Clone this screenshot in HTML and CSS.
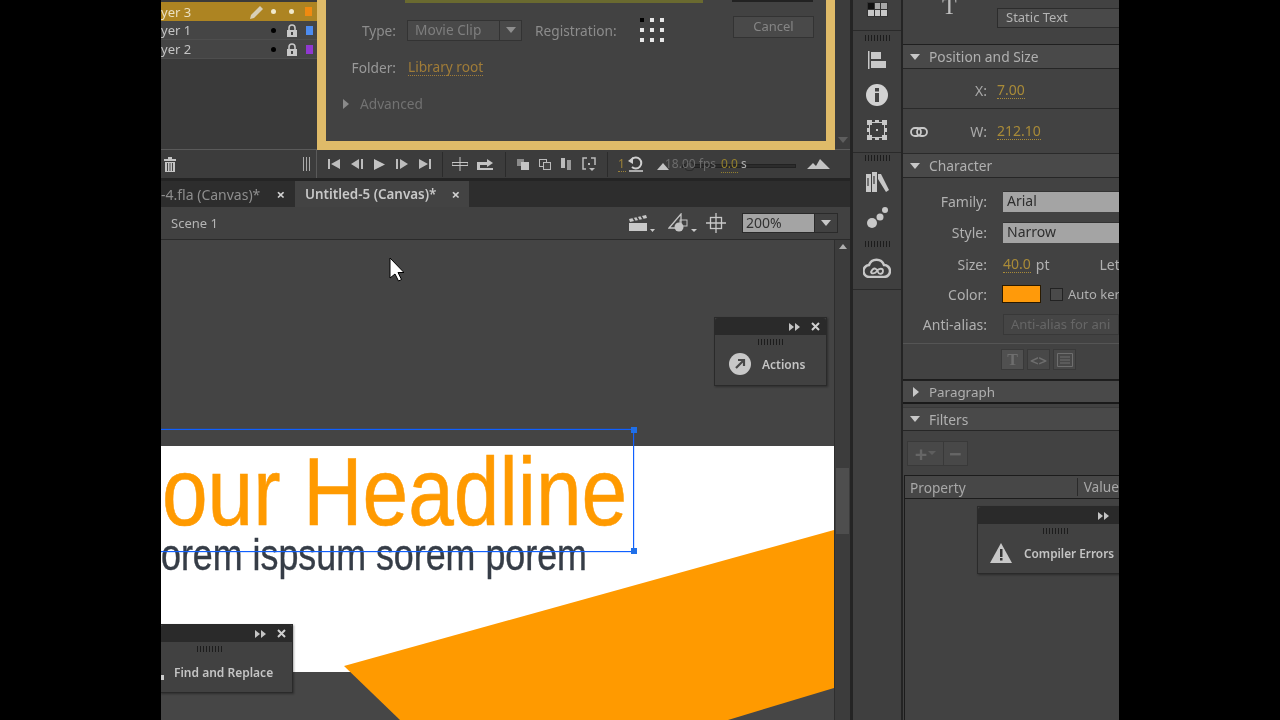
FILE: index.html
```html
<!DOCTYPE html>
<html lang="en">

<head>
    <meta charset="UTF-8">
    <meta name="viewport" content="width=device-width, initial-scale=1.0">
    <title>Animate</title>
    <link rel="stylesheet" href="styles.css">
</head>

<body>
    <div class="app">
        <div class="leftCol">
            <div class="timeline">
                <div class="tlTop">
                    <div class="layers">
                        <div class="layerRow active">
                            <span class="layerName">yer 3</span>
                            <svg class="pencil" width="16" height="16" viewBox="0 0 16 16"><path d="M1 15l1-4 9-9 3 3-9 9z" fill="#d8cfb8"/></svg>
                            <i class="dot light"></i><i class="dot light"></i>
                            <i class="swatch orangeS"></i>
                        </div>
                        <div class="layerRow">
                            <span class="layerName">yer 1</span>
                            <i class="dot"></i>
                            <svg class="lock" width="12" height="13" viewBox="0 0 12 13"><path d="M3 6V4a3 3 0 0 1 6 0v2" fill="none" stroke="#c8c8c8" stroke-width="1.6"/><rect x="1" y="6" width="10" height="7" fill="#c8c8c8"/><rect x="5" y="8" width="2" height="3" fill="#444"/></svg>
                            <i class="swatch blueS"></i>
                        </div>
                        <div class="layerRow">
                            <span class="layerName">yer 2</span>
                            <i class="dot"></i>
                            <svg class="lock" width="12" height="13" viewBox="0 0 12 13"><path d="M3 6V4a3 3 0 0 1 6 0v2" fill="none" stroke="#c8c8c8" stroke-width="1.6"/><rect x="1" y="6" width="10" height="7" fill="#c8c8c8"/><rect x="5" y="8" width="2" height="3" fill="#444"/></svg>
                            <i class="swatch purpleS"></i>
                        </div>
                    </div>
                    <div class="dialogWrap">
                        <div class="dialog">
                            <div class="nameEdge"></div>
                            <div class="cancelEdge"></div>
                            <div class="dlgRow typeRow">
                                <span class="dlgLabel">Type:</span>
                                <div class="dlgSelect"><span>Movie Clip</span><b class="selArrow"><i class="arrowDown"></i></b></div>
                                <span class="regLabel">Registration:</span>
                                <div class="regGrid">
                                    <i class="black"></i><i></i><i></i><i></i><i></i><i></i><i></i><i></i><i></i>
                                </div>
                                <div class="cancelBtn">Cancel</div>
                            </div>
                            <div class="dlgRow folderRow">
                                <span class="dlgLabel">Folder:</span>
                                <span class="dlgLink">Library root</span>
                            </div>
                            <div class="advRow"><i class="arrowRight"></i><span>Advanced</span></div>
                        </div>
                        <div class="tlScroll"><i class="arrowDown dim"></i></div>
                    </div>
                </div>
                <div class="tlBar">
                    <div class="tlBarLeft">
                        <svg width="14" height="15" viewBox="0 0 14 15"><path d="M1 2h12v2H1zM2 5h10v10H2z" fill="#c4c4c4"/><path d="M4.500 6v8M7 6v8M9.500 6v8" stroke="#444"/><rect x="5" y="0" width="4" height="2" fill="#c4c4c4"/></svg>
                        <svg class="barGrip" width="7" height="14" viewBox="0 0 7 14"><path d="M.5 0v14M3.500 0v14M6.500 0v14" stroke="#aaa"/></svg>
                    </div>
                    <div class="tlBarRight">
                        <svg width="14" height="12" viewBox="0 0 14 12"><path d="M1 1h2v10H1zM13 1v10L4 6z" fill="#bdbdbd"/></svg>
                        <svg class="playGap" width="14" height="12" viewBox="0 0 14 12"><path d="M9 1v10L1 6zM11 1h2v10h-2z" fill="#bdbdbd"/></svg>
                        <svg class="playGap" width="13" height="13" viewBox="0 0 13 13"><path d="M1 1l11 5.500L1 12z" fill="#c4c4c4"/></svg>
                        <svg class="playGap" width="14" height="12" viewBox="0 0 14 12"><path d="M1 1h2v10H1zM5 1l8 5-8 5z" fill="#bdbdbd"/></svg>
                        <svg class="playGap" width="14" height="12" viewBox="0 0 14 12"><path d="M1 1v10l9-5zM11 1h2v10h-2z" fill="#bdbdbd"/></svg>
                        <i class="barSep firstSep"></i>
                        <svg width="16" height="14" viewBox="0 0 16 14"><path d="M8 0v14" stroke="#c4c4c4"/><path d="M0 5.500h16v3H0z" fill="none" stroke="#c4c4c4"/></svg>
                        <svg class="loopIcon" width="18" height="14" viewBox="0 0 18 14"><path d="M1 13V5h10V2l6 4-6 4V8H4v3h13v2z" fill="#c4c4c4"/></svg>
                        <i class="barSep"></i>
                        <svg width="14" height="13" viewBox="0 0 14 13"><rect x="1" y="1" width="7" height="7" fill="#8a8a8a"/><rect x="5" y="4" width="8" height="8" fill="#c4c4c4"/></svg>
                        <svg class="onion" width="14" height="13" viewBox="0 0 14 13"><rect x="1.500" y="1.500" width="7" height="7" fill="none" stroke="#bbb"/><rect x="5.500" y="4.500" width="7" height="7" fill="#444" stroke="#bbb"/></svg>
                        <svg class="onion" width="12" height="14" viewBox="0 0 12 14"><rect x="1" y="1" width="4" height="10" fill="#bbb"/><rect x="7" y="3" width="4" height="10" fill="#999"/></svg>
                        <svg class="onion lastOnion" width="14" height="14" viewBox="0 0 14 14"><path d="M5 1H1v11h3M9 1h4v7" fill="none" stroke="#bbb" stroke-width="1.500"/><path d="M7 11h6l-3 3z" fill="#bbb"/><rect x="6" y="6" width="2" height="2" fill="#bbb"/></svg>
                        <i class="barSep"></i>
                        <span class="frameNum">1</span>
                        <svg class="undoIcon" width="16" height="16" viewBox="0 0 16 16"><path d="M4 3a5.500 5.500 0 1 1 0 8" fill="none" stroke="#d0d0d0" stroke-width="2"/><path d="M0 5l5-4v7z" fill="#d0d0d0"/><path d="M1 15h14" stroke="#d0d0d0" stroke-width="1.500"/></svg>
                        <div class="slideArea">
                            <svg class="mtSmall" width="12" height="7" viewBox="0 0 12 7"><path d="M0 7l6-7 6 7z" fill="#c4c4c4"/></svg>
                            <i class="slideLine"></i>
                            <i class="slideKnob"></i>
                            <span class="fps">18.00 fps</span>
                            <span class="secs"><b>0.0</b> s</span>
                        </div>
                        <svg class="mtBig" width="23" height="10" viewBox="0 0 23 10"><path d="M0 10l6-6 3 3 4-7 10 10z" fill="#c4c4c4"/></svg>
                    </div>
                </div>
            </div>
            <div class="tabs">
                <div class="tab"><span>-4.fla (Canvas)*</span><b class="tabX">×</b></div>
                <div class="tab current"><span>Untitled-5 (Canvas)*</span><b class="tabX">×</b></div>
            </div>
            <div class="editBar">
                <span class="scene">Scene 1</span>
                <div class="editTools">
                    <svg width="27" height="18" viewBox="0 0 27 18"><path d="M1 5l17-4 1 3L2 8z" fill="#c8c8c8"/><path d="M5 4l2 3M9 3l2 3M13 2l2 3" stroke="#444" stroke-width="1.500"/><path d="M1 9h18v8H1z" fill="#c8c8c8"/><path d="M22 15h5l-2.500 3z" fill="#c8c8c8"/></svg>
                    <svg class="symIcon" width="30" height="20" viewBox="0 0 30 20"><path d="M1 15L13 1v14z" fill="none" stroke="#c4c4c4" stroke-width="1.300"/><rect x="12" y="7" width="7" height="6" fill="none" stroke="#c4c4c4"/><circle cx="11" cy="14" r="4.500" fill="#c4c4c4"/><path d="M23 16h6l-3 3z" fill="#c8c8c8"/></svg>
                    <svg class="clipIcon" width="20" height="20" viewBox="0 0 20 20"><rect x="4.500" y="4.500" width="11" height="11" fill="none" stroke="#c8c8c8" stroke-width="1.300"/><path d="M10 0v20M0 10h20" stroke="#c8c8c8" stroke-width="1.300"/></svg>
                    <div class="zoomBox"><span>200%</span><b class="selArrow"><i class="arrowDown bright"></i></b></div>
                </div>
            </div>
            <div class="stage">
                <div class="artboard">
                    <div class="headline">our Headline</div>
                    <div class="subline">orem ispsum sorem porem</div>
                    <div class="artDark"></div>
                    <svg class="artShape" width="490" height="190" viewBox="0 0 490 190"><path d="M0 136L490 0v158L384 190H56z" fill="#ff9a00"/></svg>
                </div>
                <div class="selBox"><i class="handle topH"></i><i class="handle botH"></i></div>
                <div class="stageScroll">
                    <i class="arrowUp"></i>
                    <i class="thumb"></i>
                </div>
                <div class="floatPanel actions">
                    <div class="floatHead">
                        <svg class="ff" width="11" height="8" viewBox="0 0 11 8"><path d="M0 0l5 4-5 4zM6 0l5 4-5 4z" fill="#c4c4c4"/></svg>
                        <svg class="fx" width="9" height="9" viewBox="0 0 9 9"><path d="M1 1l7 7M8 1L1 8" stroke="#d0d0d0" stroke-width="2"/></svg>
                    </div>
                    <div class="grip"></div>
                    <div class="floatBody">
                        <svg width="22" height="22" viewBox="0 0 22 22"><circle cx="11" cy="11" r="11" fill="#c8c8c8"/><path d="M7 15L15 7M9 7h6v6" fill="none" stroke="#484848" stroke-width="2.200"/></svg>
                        <span>Actions</span>
                    </div>
                </div>
                <div class="floatPanel findPanel">
                    <div class="floatHead">
                        <svg class="ff" width="11" height="8" viewBox="0 0 11 8"><path d="M0 0l5 4-5 4zM6 0l5 4-5 4z" fill="#c4c4c4"/></svg>
                        <svg class="fx" width="9" height="9" viewBox="0 0 9 9"><path d="M1 1l7 7M8 1L1 8" stroke="#d0d0d0" stroke-width="2"/></svg>
                    </div>
                    <div class="grip"></div>
                    <div class="floatBody"><span>Find and Replace</span></div>
                    <i class="iconTail"></i>
                </div>
                <svg class="cursor" width="15" height="25" viewBox="0 0 15 25"><path d="M1 1v20l5-4 3.500 7 3-1.500L9 15.500h6z" fill="#fff" stroke="#000"/></svg>
            </div>
        </div>

        <div class="dock">
            <div class="dockGroup firstGroup">
                <svg width="21" height="15" viewBox="0 0 21 15"><rect x="0" y="0" width="21" height="15" fill="#333"/><rect x="1" y="1" width="6" height="6" fill="#111"/><rect x="8" y="1" width="5" height="6" fill="#a8a8a8"/><rect x="14" y="1" width="6" height="6" fill="#a8a8a8"/><rect x="1" y="8" width="6" height="6" fill="#c8c8c8"/><rect x="8" y="8" width="5" height="6" fill="#c8c8c8"/><rect x="14" y="8" width="6" height="6" fill="#c8c8c8"/></svg>
            </div>
            <div class="dockGroup midGroup">
                <div class="grip"></div>
                <svg class="alignIcon" width="18" height="18" viewBox="0 0 18 18"><rect width="1.500" height="18" fill="#c8c8c8"/><rect x="3" y="1" width="10" height="7" fill="#c8c8c8"/><rect x="3" y="10" width="15" height="7" fill="#c8c8c8"/></svg>
                <svg class="infoIcon" width="22" height="22" viewBox="0 0 22 22"><circle cx="11" cy="11" r="11" fill="#d2d2d2"/><rect x="9" y="4" width="4" height="3.500" fill="#444"/><rect x="9" y="9" width="4" height="9" fill="#444"/></svg>
                <svg class="frameIcon" width="20" height="20" viewBox="0 0 20 20"><rect x="2.500" y="2.500" width="15" height="15" fill="none" stroke="#c8c8c8"/><path d="M0 0h5v5H0zM15 0h5v5h-5zM0 15h5v5H0zM15 15h5v5h-5zM8 0h4v3H8zM8 17h4v3H8zM0 8h3v4H0zM17 8h3v4h-3z" fill="#c8c8c8"/><rect x="9" y="9" width="2" height="2" fill="#c8c8c8"/></svg>
            </div>
            <div class="dockGroup lastGroup">
                <div class="grip"></div>
                <svg class="libIcon" width="23" height="20" viewBox="0 0 23 20"><path d="M0 2h5v18H0zM6 0h5v20H6zM12 2h3l8 16-3 2-8-13z" fill="#c8c8c8"/><path d="M2 6v8M8 4v8" stroke="#555" stroke-width="1.500"/></svg>
                <svg class="dotsIcon" width="22" height="22" viewBox="0 0 22 22"><circle cx="6" cy="17" r="5" fill="#c8c8c8"/><circle cx="14" cy="11" r="3.500" fill="#c8c8c8"/><circle cx="19" cy="4" r="3" fill="#c8c8c8"/></svg>
                <div class="grip lowGrip"></div>
                <svg class="ccIcon" width="28" height="20" viewBox="0 0 28 20"><path d="M7 19a6 6 0 0 1-1-12 8 8 0 0 1 15 0 6 6 0 0 1 0 12z" fill="none" stroke="#c8c8c8" stroke-width="2.500"/><path d="M8 14c3-6 6-3 7 0s5 2 5-1-4-3-6 0-6 3-6 1z" fill="none" stroke="#c8c8c8" stroke-width="1.800"/></svg>
            </div>
            <div class="dockRest"></div>
        </div>

        <div class="props">
            <div class="propsTop">
                <span class="bigT">T</span>
                <div class="propSelect">Static Text</div>
            </div>
            <div class="secHead"><i class="arrowDown bright"></i><span>Position and Size</span></div>
            <div class="posRow xRow"><label>X:</label><span class="num">7.00</span></div>
            <div class="posRow wRow">
                <svg class="linkIcon" width="18" height="10" viewBox="0 0 18 10"><rect x="1" y="1" width="10" height="8" rx="4" fill="none" stroke="#c8c8c8" stroke-width="1.800"/><rect x="7" y="1" width="10" height="8" rx="4" fill="none" stroke="#c8c8c8" stroke-width="1.800"/></svg>
                <label>W:</label><span class="num">212.10</span>
            </div>
            <div class="secHead"><i class="arrowDown bright"></i><span>Character</span></div>
            <div class="charRows">
                <div class="charRow familyRow"><label>Family:</label><div class="field">Arial</div></div>
                <div class="charRow styleRow"><label>Style:</label><div class="field">Narrow</div></div>
                <div class="charRow sizeRow"><label>Size:</label><span class="num">40.0</span><span class="unit">pt</span><span class="letter">Let</span></div>
                <div class="charRow colorRow"><label>Color:</label><i class="colorChip"></i><i class="check"></i><span class="unit autoKern">Auto ker</span></div>
                <div class="charRow aliasRow"><label>Anti-alias:</label><div class="field off">Anti-alias for ani</div></div>
            </div>
            <div class="formatRow">
                <div class="fmtBtn on"><span>T</span></div>
                <div class="fmtBtn"><span>&lt;&gt;</span></div>
                <div class="fmtBtn">
                    <svg width="16" height="14" viewBox="0 0 16 14"><path d="M.5.500h15v13H.5zM3 4h10M3 7h10M3 10h10" fill="none" stroke="#6e6e6e"/></svg>
                </div>
            </div>
            <div class="secHead closed"><i class="arrowRight bright"></i><span>Paragraph</span></div>
            <div class="secHead filters"><i class="arrowDown bright"></i><span>Filters</span></div>
            <div class="filterBtns">
                <div class="addBtn"><span>+</span><i class="arrowDown dim"></i></div>
                <div class="minusBtn"><span>−</span></div>
            </div>
            <div class="tableHead"><span class="propCol">Property</span><span class="valCol">Value</span></div>
            <div class="tableBody">
                <div class="floatPanel compiler">
                    <div class="floatHead">
                        <svg class="ff" width="11" height="8" viewBox="0 0 11 8"><path d="M0 0l5 4-5 4zM6 0l5 4-5 4z" fill="#c4c4c4"/></svg>
                    </div>
                    <div class="grip"></div>
                    <div class="floatBody">
                        <svg width="22" height="20" viewBox="0 0 22 20"><path d="M11 0l11 20H0z" fill="#c8c8c8"/><rect x="10" y="6" width="2.500" height="8" fill="#333"/><rect x="10" y="15" width="2.500" height="2.500" fill="#333"/></svg>
                        <span>Compiler Errors</span>
                    </div>
                </div>
            </div>
        </div>
    </div>
</body>

</html>
```

FILE: styles.css
```css
* {
    margin: 0;
    padding: 0;
    box-sizing: border-box;
}

html,
body {
    width: 1280px;
    height: 720px;
    overflow: hidden;
    background-color: #000;
}

body {
    padding-left: 161px;
    font-family: "Noto Sans", "Liberation Sans", sans-serif;
    font-size: 13px;
    color: #b8b8b8;
}

i {
    display: block;
}

.app {
    width: 958px;
    height: 720px;
    display: flex;
    overflow: hidden;
    background-color: #424242;
    filter: blur(0.4px);
}

.leftCol {
    width: 689px;
    display: flex;
    flex-direction: column;
}

/* arrows */
.arrowDown {
    width: 0;
    height: 0;
    border-left: 5px solid transparent;
    border-right: 5px solid transparent;
    border-top: 6px solid #8e8e8e;
}

.arrowDown.bright {
    border-top-color: #c8c8c8;
}

.arrowDown.dim {
    border-top-color: #5e5e5e;
}

.arrowRight {
    width: 0;
    height: 0;
    border-top: 5px solid transparent;
    border-bottom: 5px solid transparent;
    border-left: 6px solid #8a8a8a;
}

.arrowRight.bright {
    border-left-color: #c8c8c8;
}

.arrowUp {
    width: 0;
    height: 0;
    border-left: 4px solid transparent;
    border-right: 4px solid transparent;
    border-bottom: 5px solid #b0b0b0;
    margin: 4px auto 0;
}

/* timeline */
.timeline {
    height: 181px;
    background-color: #3c3c3c;
    border-bottom: 3px solid #242424;
}

.tlTop {
    height: 150px;
    display: flex;
    border-bottom: 1px solid #5a5a5a;
}

.layers {
    width: 156px;
    padding-top: 2px;
    background-color: #3a3a3a;
}

.layerRow {
    height: 19px;
    display: flex;
    align-items: center;
    border-bottom: 1px solid #4e4e4e;
    background-color: #454545;
    color: #c4c4c4;
}

.layerRow.active {
    background-color: #ad8422;
    color: #eadfc0;
    border-bottom: 0;
}

.layerName {
    width: 107px;
    white-space: nowrap;
}

.pencil {
    margin-left: -19px;
    margin-right: 6px;
    flex: none;
}

.dot {
    width: 5px;
    height: 5px;
    border-radius: 50%;
    background-color: #000;
    margin-right: 13px;
    flex: none;
}

.dot.light {
    background-color: #f0e8cc;
}

.dot.light + .dot.light {
    margin-right: 11px;
}

.layerRow:not(.active) .dot {
    margin-left: 3px;
    margin-right: 12px;
}

.lock {
    flex: none;
    margin-right: 8px;
    margin-left: -2px;
}

.swatch {
    width: 7px;
    height: 9px;
    flex: none;
}

.orangeS {
    background-color: #f08a10;
}

.blueS {
    background-color: #4d8cf0;
}

.purpleS {
    background-color: #9038d0;
}

.dialogWrap {
    flex: 1;
    display: flex;
    min-width: 0;
}

.dialog {
    width: 518px;
    height: 150px;
    background-color: #424242;
    border: 9px solid #dfbb69;
    border-top: 0;
    position: relative;
    color: #8c8c8c;
    font-size: 13.700px;
}

.nameEdge {
    position: absolute;
    left: 79px;
    top: 0;
    width: 298px;
    height: 3px;
    background-color: #6a6a30;
}

.cancelEdge {
    position: absolute;
    left: 406px;
    top: 0;
    width: 81px;
    height: 2px;
    background-color: #222;
}

.dlgRow {
    display: flex;
    align-items: center;
}

.typeRow {
    margin-top: 18px;
    height: 24px;
}

.dlgLabel {
    width: 70px;
    text-align: right;
    flex: none;
}

.folderRow .dlgLabel {
    color: #999;
}

.dlgSelect {
    margin-left: 11px;
    width: 115px;
    height: 21px;
    display: flex;
    justify-content: space-between;
    background-color: #494949;
    border: 1px solid #333;
    padding-left: 7px;
    line-height: 18px;
    color: #7e7e7e;
    flex: none;
}

.selArrow {
    width: 22px;
    display: flex;
    align-items: center;
    justify-content: center;
    border-left: 1px solid #333;
}

.regLabel {
    margin-left: 13px;
    width: 84px;
    white-space: nowrap;
    flex: none;
}

.regGrid {
    margin-left: 21px;
    display: grid;
    grid-template-columns: repeat(3, 4px);
    grid-auto-rows: 4px;
    gap: 6px;
    flex: none;
}

.regGrid i {
    background-color: #e6e6e6;
}

.regGrid .black {
    background-color: #000;
}

.cancelBtn {
    margin-left: 69px;
    margin-top: -6px;
    width: 81px;
    height: 22px;
    text-align: center;
    line-height: 19px;
    background-color: #494949;
    border: 1px solid #333;
    color: #858585;
    flex: none;
    font-size: 13px;
}

.folderRow {
    margin-top: 13px;
    height: 24px;
}

.dlgLink {
    margin-left: 12px;
    color: #a07c38;
    border-bottom: 1px dotted #a07c38;
    line-height: 16px;
}

.advRow {
    display: flex;
    align-items: center;
    margin-top: 15px;
    margin-left: 17px;
    gap: 11px;
    color: #727272;
}

.tlScroll {
    width: 15px;
    height: 149px;
    display: flex;
    align-items: flex-end;
    justify-content: center;
    padding-bottom: 6px;
    background-color: #3c3c3c;
}

.tlBar {
    height: 28px;
    display: flex;
    align-items: center;
}

.tlBarLeft {
    width: 156px;
    height: 28px;
    display: flex;
    align-items: center;
    justify-content: space-between;
    padding: 0 6px 0 2px;
    border-right: 1px solid #5a5a5a;
}

.tlBarRight {
    flex: 1;
    display: flex;
    align-items: center;
    padding-left: 10px;
}

.playGap {
    margin-left: 9px;
}

.barSep {
    width: 1px;
    height: 25px;
    background-color: #2b2b2b;
    margin: 0 10px 0 11px;
    flex: none;
}

.barSep.firstSep {
    margin: 0 9px 0 10px;
}

.loopIcon {
    margin-left: 8px;
}

.onion {
    margin-left: 8px;
}

.lastOnion {
    margin-left: 10px;
}

.frameNum {
    color: #9c8238;
    font-size: 12px;
    width: 8px;
    border-bottom: 1px dotted #9c8238;
    line-height: 14px;
}

.undoIcon {
    margin-left: 2px;
}

.slideArea {
    position: relative;
    width: 150px;
    height: 20px;
    margin-left: 13px;
    font-size: 12px;
    flex: none;
}

.mtSmall {
    position: absolute;
    left: 0;
    top: 9px;
}

.fps {
    position: absolute;
    left: 8px;
    top: 1px;
    color: #6d6d6d;
    white-space: nowrap;
}

.secs {
    position: absolute;
    left: 64px;
    top: 1px;
    color: #b0b0b0;
    white-space: nowrap;
}

.secs b {
    font-weight: 400;
    color: #94802e;
    border-bottom: 1px dotted #94802e;
}

.slideLine {
    position: absolute;
    left: 25px;
    right: 11px;
    top: 10px;
    height: 4px;
    background-color: #2c2c2c;
    border: 1px solid #222;
}

.slideKnob {
    position: absolute;
    left: 28px;
    top: 8px;
    width: 9px;
    height: 9px;
    border-radius: 3px;
    background-color: #3e3e3e;
    border: 1px solid #2a2a2a;
}

/* document tabs */
.tabs {
    height: 26px;
    display: flex;
    background-color: #2d2d2d;
}

.tab {
    width: 134px;
    display: flex;
    align-items: center;
    justify-content: space-between;
    padding-right: 10px;
    font-size: 14px;
    color: #8e8e8e;
    white-space: nowrap;
}

.tab.current {
    width: 174px;
    padding-left: 10px;
    padding-right: 9px;
    background-color: #434343;
    color: #c8c8c8;
}

.current span {
    font-weight: 600;
    font-size: 13.400px;
}

.tabX {
    font-size: 15px;
    line-height: 15px;
    color: #d0d0d0;
}

.editBar {
    height: 33px;
    display: flex;
    align-items: center;
    justify-content: space-between;
    padding: 0 12px 0 10px;
    background-color: #414141;
    border-bottom: 1px solid #2a2a2a;
}

.scene {
    color: #b4b4b4;
}

.editTools {
    display: flex;
    align-items: center;
}

.symIcon {
    margin-left: 13px;
}

.clipIcon {
    margin-left: 8px;
}

.zoomBox {
    margin-left: 16px;
    width: 96px;
    height: 20px;
    display: flex;
    background-color: #a4a4a4;
    border: 1px solid #2a2a2a;
    padding-left: 3px;
    line-height: 18px;
    font-size: 14px;
    color: #333;
    justify-content: space-between;
}

.zoomBox .selArrow {
    background-color: #414141;
    width: 23px;
    border-left: 1px solid #2a2a2a;
}

/* stage */
.stage {
    flex: 1;
    position: relative;
    overflow: hidden;
    background-color: #444;
}

.artboard {
    position: absolute;
    left: 0;
    top: 206px;
    width: 673px;
    height: 274px;
    overflow: hidden;
    background-color: #fff;
}

.headline,
.subline {
    position: absolute;
    font-family: "Liberation Sans", sans-serif;
    white-space: nowrap;
    transform-origin: left top;
}

.headline {
    left: 1px;
    top: 4px;
    font-size: 96px;
    line-height: 84px;
    color: #ff9a00;
    -webkit-text-stroke: 0.6px #ff9a00;
    transform: scaleX(0.8545);
}

.subline {
    left: 0;
    top: 89px;
    font-size: 44px;
    line-height: 40px;
    color: #363d47;
    -webkit-text-stroke: 0.4px #363d47;
    transform: scaleX(0.814);
}

.artDark {
    position: absolute;
    left: 0;
    right: 0;
    top: 226px;
    bottom: 0;
    background-color: #464646;
}

.artShape {
    position: absolute;
    left: 183px;
    top: 84px;
}

.selBox {
    position: absolute;
    left: -2px;
    top: 189px;
    width: 475px;
    height: 123px;
    border: 1px solid #1060ff;
    box-shadow: 0 0 1px 0 #1060ff;
}

.handle {
    position: absolute;
    right: -4px;
    width: 6px;
    height: 6px;
    background-color: #1f6fe8;
}

.topH {
    top: -3px;
}

.botH {
    bottom: -3px;
}

.stageScroll {
    position: absolute;
    right: 0;
    top: 0;
    bottom: 0;
    width: 16px;
    background-color: #3c3c3c;
    border-left: 1px solid #2e2e2e;
}

.thumb {
    position: absolute;
    left: 1px;
    right: 1px;
    top: 228px;
    height: 66px;
    background-color: #4e4e4e;
}

.cursor {
    position: absolute;
    left: 228px;
    top: 17px;
}

/* floating panels */
.floatPanel {
    position: absolute;
    background-color: #414141;
    border: 1px solid #2a2a2a;
    box-shadow: 1px 1px 2px rgba(0, 0, 0, 0.35);
}

.floatHead {
    height: 17px;
    display: flex;
    align-items: center;
    justify-content: flex-end;
    gap: 11px;
    padding-right: 6px;
    background-color: #2a2a2a;
    border-radius: 3px 3px 0 0;
}

.grip {
    width: 25px;
    height: 6px;
    margin: 4px auto 0;
    background-image: repeating-linear-gradient(90deg, #1c1c1c 0, #1c1c1c 1px, transparent 1px, transparent 3px);
}

.floatBody {
    display: flex;
    align-items: center;
    font-size: 12px;
    font-weight: 600;
    color: #c4c4c4;
    white-space: nowrap;
}

.actions {
    left: 553px;
    top: 77px;
    width: 113px;
    height: 69px;
}

.actions .floatBody {
    gap: 11px;
    padding: 8px 0 0 14px;
}

.findPanel {
    left: -1px;
    top: 384px;
    width: 133px;
    height: 69px;
}

.findPanel .grip {
    margin-left: 36px;
}

.findPanel .floatBody {
    padding: 12px 0 0 13px;
}

.iconTail {
    position: absolute;
    left: 0;
    top: 50px;
    width: 3px;
    height: 5px;
    background-color: #ccc;
}

/* tool dock */
.dock {
    width: 53px;
    display: flex;
    flex-direction: column;
    background-color: #3f3f3f;
    border-left: 3px solid #242424;
    border-right: 2px solid #242424;
}

.dockGroup {
    display: flex;
    flex-direction: column;
    align-items: center;
    border-bottom: 1px solid #2a2a2a;
}

.dockGroup svg {
    flex: none;
}

.firstGroup {
    height: 31px;
    padding-top: 2px;
}

.midGroup {
    height: 122px;
}

.lastGroup {
    height: 137px;
}

.lastGroup > .grip:first-child {
    margin-top: 2px;
}

.alignIcon {
    margin-top: 10px;
}

.infoIcon {
    margin-top: 15px;
}

.frameIcon {
    margin-top: 14px;
}

.libIcon {
    margin-top: 11px;
}

.dotsIcon {
    margin-top: 14px;
}

.lowGrip {
    margin-top: 13px;
}

.ccIcon {
    margin-top: 11px;
}

.dockRest {
    flex: 1;
}

/* properties panel */
.props {
    width: 216px;
    display: flex;
    flex-direction: column;
    background-color: #424242;
}

.propsTop {
    height: 45px;
    display: flex;
    align-items: flex-start;
    border-bottom: 1px solid #1f1f1f;
}

.bigT {
    width: 16px;
    font-family: "Liberation Serif", serif;
    font-size: 24px;
    line-height: 24px;
    margin: -6px 0 0 39px;
    color: #bdbdbd;
}

.propSelect {
    margin: 8px 0 0 39px;
    flex: 1;
    height: 20px;
    padding-left: 8px;
    line-height: 17px;
    background-color: #494949;
    border: 1px solid #2c2c2c;
    border-right: 0;
    color: #b4b4b4;
}

.secHead {
    height: 24px;
    display: flex;
    align-items: center;
    gap: 9px;
    padding-left: 7px;
    font-size: 13.800px;
    background-color: #494949;
    border-bottom: 1px solid #262626;
    color: #b0b0b0;
    white-space: nowrap;
}

.secHead.closed {
    gap: 10px;
    padding-left: 10px;
    font-size: 13.400px;
    border-top: 1px solid #1f1f1f;
    border-bottom: 2px solid #1a1a1a;
}

.secHead.filters {
    margin-top: 3px;
    height: 24px;
    border-top: 1px solid #3a3a3a;
}

.posRow {
    height: 40px;
    display: flex;
    align-items: center;
    font-size: 14px;
    border-bottom: 1px solid #2a2a2a;
}

.xRow {
    padding-top: 3px;
}

.posRow label {
    width: 84px;
    text-align: right;
    margin-right: 10px;
    color: #a8a8a8;
}

.wRow {
    height: 45px;
    position: relative;
}

.linkIcon {
    position: absolute;
    left: 7px;
    top: 18px;
}

.num {
    color: #a98b38;
    border-bottom: 1px dotted #a98b38;
    line-height: 16px;
}

.charRows {
    height: 166px;
    padding-top: 8px;
    font-size: 14px;
    border-bottom: 1px solid #555;
}

.charRow {
    display: flex;
    align-items: center;
    white-space: nowrap;
}

.familyRow {
    height: 31px;
}

.styleRow {
    height: 30px;
}

.sizeRow {
    height: 35px;
}

.colorRow {
    height: 24px;
}

.aliasRow {
    height: 37px;
}

.charRow label {
    width: 84px;
    text-align: right;
    margin-right: 16px;
    color: #b0b0b0;
    flex: none;
}

.field {
    flex: 1;
    height: 21px;
    padding-left: 4px;
    line-height: 20px;
    background-color: #a4a4a4;
    color: #2e2e2e;
    box-shadow: inset 0 1px 0 #333;
}

.field.off {
    background-color: #454545;
    color: #666;
    border: 1px solid #383838;
    padding-left: 7px;
    box-shadow: none;
    overflow: hidden;
    line-height: 18px;
    font-size: 13px;
}

.unit {
    margin-left: 5px;
    color: #b0b0b0;
}

.autoKern {
    font-size: 13px;
}

.letter {
    margin-left: 50px;
    color: #b0b0b0;
}

.colorChip {
    width: 39px;
    height: 18px;
    margin-left: -1px;
    background-color: #ff9a0a;
    border: 1px solid #2a1a00;
    flex: none;
}

.check {
    width: 13px;
    height: 13px;
    margin-left: 9px;
    background-color: #4a4a4a;
    border: 1px solid #222;
    flex: none;
}

.formatRow {
    height: 36px;
    display: flex;
    align-items: center;
    padding: 0 0 4px 98px;
    gap: 3px;
    border-bottom: 1px solid #1c1c1c;
}

.fmtBtn {
    width: 23px;
    height: 21px;
    display: flex;
    align-items: center;
    justify-content: center;
    background-color: #484848;
    border: 1px solid #393939;
    color: #6e6e6e;
    font-weight: 700;
    font-size: 15px;
}

.fmtBtn.on {
    background-color: #505050;
    font-family: "Liberation Serif", serif;
    font-size: 16px;
}

.filterBtns {
    height: 44px;
    display: flex;
    align-items: center;
    padding-left: 4px;
}

.addBtn,
.minusBtn {
    height: 25px;
    display: flex;
    align-items: center;
    justify-content: center;
    border: 1px solid #393939;
    background-color: #484848;
    color: #666;
    font-size: 22px;
    font-weight: 700;
}

.addBtn {
    width: 37px;
    gap: 1px;
}

.addBtn .arrowDown {
    border-left-width: 4px;
    border-right-width: 4px;
    border-top-width: 4px;
}

.minusBtn {
    width: 24px;
    border-left: 0;
}

.tableHead {
    height: 24px;
    display: flex;
    align-items: center;
    margin-left: 1px;
    font-size: 13.700px;
    background-color: #474747;
    border: 1px solid #1c1c1c;
    border-right: 0;
    white-space: nowrap;
}

.propCol {
    width: 176px;
    padding-left: 5px;
    color: #a8a8a8;
}

.valCol {
    border-left: 1px solid #2a2a2a;
    padding-left: 6px;
    line-height: 18px;
    color: #a8a8a8;
}

.tableBody {
    flex: 1;
    position: relative;
    margin-left: 1px;
    border-left: 1px solid #1c1c1c;
}

.compiler {
    left: 72px;
    top: 7px;
    width: 160px;
    height: 68px;
}

.compiler .floatHead {
    justify-content: flex-start;
    padding-left: 120px;
}

.compiler .grip {
    margin-left: 65px;
}

.compiler .floatBody {
    gap: 12px;
    padding: 9px 0 0 12px;
    font-size: 11.800px;
}
```
